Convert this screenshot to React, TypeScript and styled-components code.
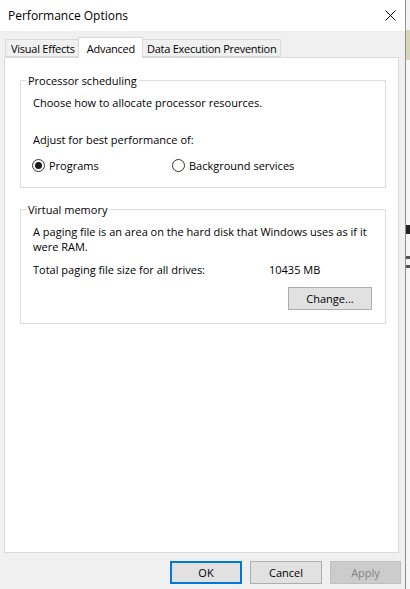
import React from "react";
import styled, { createGlobalStyle } from "styled-components";

const Global = createGlobalStyle`
  html, body {
    margin: 0;
    padding: 0;
    width: 410px;
    height: 589px;
    overflow: hidden;
    background: #ffffff;
  }
  * { box-sizing: border-box; }
  body {
    font-family: "Open Sans", "Noto Sans", "Liberation Sans", sans-serif;
    font-size: 11px;
    color: #000;
  }
`;

const Screen = styled.div`
  display: flex;
  width: 410px;
  height: 589px;
`;

const Window = styled.div`
  width: 406px;
  height: 589px;
  display: flex;
  flex-direction: column;
  background: #f0f0f0;
  border-right: 1px solid #8f8f8f;
`;

const Outside = styled.div`
  flex: 1;
  display: flex;
  flex-direction: column;
  background: #f6f6f6;
`;

const OutsideBand = styled.div<{ $h: number; $c: string }>`
  height: ${(p) => p.$h}px;
  background: ${(p) => p.$c};
  flex-shrink: 0;
`;

const TitleBar = styled.div`
  height: 31px;
  flex-shrink: 0;
  background: #ffffff;
  display: flex;
  align-items: center;
  justify-content: space-between;
  padding: 0 9px 0 8px;
`;

const Title = styled.span`
  font-size: 12px;
  line-height: 15px;
`;

const CloseIcon = styled.svg`
  width: 11px;
  height: 11px;
  margin-top: -1px;
`;

const Body = styled.div`
  flex: 1;
  display: flex;
  flex-direction: column;
  padding: 6px 6px 0 4px;
`;

const TabStrip = styled.div`
  display: flex;
  align-items: flex-end;
  height: 20px;
  padding-left: 1px;
  position: relative;
  z-index: 1;
`;

const Tab = styled.div<{ $active?: boolean }>`
  height: ${(p) => (p.$active ? 21 : 18)}px;
  padding: ${(p) => (p.$active ? "1px 7px 0 8px" : "0 4px 0 5px")};
  margin: ${(p) => (p.$active ? "0 -2px -1px" : "0")};
  display: flex;
  align-items: center;
  background: ${(p) => (p.$active ? "#ffffff" : "#f0f0f0")};
  border: 1px solid #d9d9d9;
  border-bottom: ${(p) => (p.$active ? "none" : "1px solid #d9d9d9")};
  position: relative;
  z-index: ${(p) => (p.$active ? 2 : 1)};
  line-height: 15px;
  letter-spacing: -0.25px;
  white-space: nowrap;
`;

const Panel = styled.div`
  height: 496px;
  background: #ffffff;
  border: 1px solid #d9d9d9;
  padding: 15px 12px 0 15px;
  display: flex;
  flex-direction: column;
  gap: 14px;
`;

const Group = styled.fieldset<{ $pb: number }>`
  margin: 0;
  border: 1px solid #dcdcdc;
  padding: 7px 12px ${(p) => p.$pb}px 12px;
  min-width: 0;
`;

const Legend = styled.legend`
  padding: 0 2px;
  margin-left: -7px;
  line-height: 15px;
`;

const Line = styled.div<{ $mt?: number }>`
  line-height: 15px;
  margin-top: ${(p) => p.$mt ?? 0}px;
`;

const RadioRow = styled.div`
  display: grid;
  grid-template-columns: 140px auto;
  margin-top: 11px;
  margin-left: -1px;
`;

const RadioLabel = styled.label`
  display: flex;
  align-items: center;
  gap: 4px;
  line-height: 15px;
`;

const RadioCircle = styled.span<{ $checked?: boolean }>`
  width: 13px;
  height: 13px;
  border-radius: 50%;
  border: 1px solid #333333;
  background: #ffffff;
  display: flex;
  align-items: center;
  justify-content: center;
  &::after {
    content: "";
    width: 7px;
    height: 7px;
    border-radius: 50%;
    background: ${(p) => (p.$checked ? "#1a1a1a" : "transparent")};
  }
`;

const InfoRow = styled.div`
  display: grid;
  grid-template-columns: 236px auto;
  line-height: 15px;
  margin-top: 8px;
`;

const ButtonRight = styled.div`
  display: flex;
  justify-content: flex-end;
  margin-top: 10px;
  margin-right: 1px;
`;

const Button = styled.button<{ $variant?: "default" | "normal" | "disabled" }>`
  width: ${(p) => (p.$variant === "disabled" ? 71 : 72)}px;
  height: 23px;
  padding: 0;
  font-family: inherit;
  font-size: 11px;
  line-height: 15px;
  background: ${(p) => (p.$variant === "disabled" ? "#cccccc" : "#e1e1e1")};
  color: ${(p) => (p.$variant === "disabled" ? "#838383" : "#000000")};
  border: ${(p) =>
    p.$variant === "default"
      ? "2px solid #0078d7"
      : p.$variant === "disabled"
      ? "1px solid #bfbfbf"
      : "1px solid #adadad"};
`;

const ChangeButton = styled(Button)`
  width: 84px;
`;

const Footer = styled.div`
  display: flex;
  justify-content: flex-end;
  gap: 8px;
  margin-top: 8px;
  margin-right: -2px;
`;

export default function App() {
  return (
    <>
      <Global />
      <Screen>
        <Window>
          <TitleBar>
            <Title>Performance Options</Title>
            <CloseIcon viewBox="0 0 11 11">
              <path d="M0.5 0.5 L10.5 10.5 M10.5 0.5 L0.5 10.5" stroke="#000" strokeWidth="1" fill="none" />
            </CloseIcon>
          </TitleBar>
          <Body>
            <TabStrip>
              <Tab>Visual Effects</Tab>
              <Tab $active>Advanced</Tab>
              <Tab>Data Execution Prevention</Tab>
            </TabStrip>
            <Panel>
              <Group $pb={14}>
                <Legend>Processor scheduling</Legend>
                <Line>Choose how to allocate processor resources.</Line>
                <Line $mt={22}>Adjust for best performance of:</Line>
                <RadioRow>
                  <RadioLabel>
                    <RadioCircle $checked />
                    Programs
                  </RadioLabel>
                  <RadioLabel>
                    <RadioCircle />
                    Background services
                  </RadioLabel>
                </RadioRow>
              </Group>
              <Group $pb={13}>
                <Legend>Virtual memory</Legend>
                <Line>
                  A paging file is an area on the hard disk that Windows uses as if it were RAM.
                </Line>
                <InfoRow>
                  <span>Total paging file size for all drives:</span>
                  <span>10435 MB</span>
                </InfoRow>
                <ButtonRight>
                  <ChangeButton>Change...</ChangeButton>
                </ButtonRight>
              </Group>
            </Panel>
            <Footer>
              <Button $variant="default">OK</Button>
              <Button>Cancel</Button>
              <Button $variant="disabled">Apply</Button>
            </Footer>
          </Body>
        </Window>
        <Outside>
          <OutsideBand $h={30} $c="#f4f4f4" />
          <OutsideBand $h={30} $c="#d9d6b8" />
          <OutsideBand $h={165} $c="#f6f6f6" />
          <OutsideBand $h={9} $c="#222222" />
          <OutsideBand $h={22} $c="#f6f6f6" />
          <OutsideBand $h={3} $c="#555555" />
          <OutsideBand $h={6} $c="#f6f6f6" />
          <OutsideBand $h={3} $c="#555555" />
        </Outside>
      </Screen>
    </>
  );
}
